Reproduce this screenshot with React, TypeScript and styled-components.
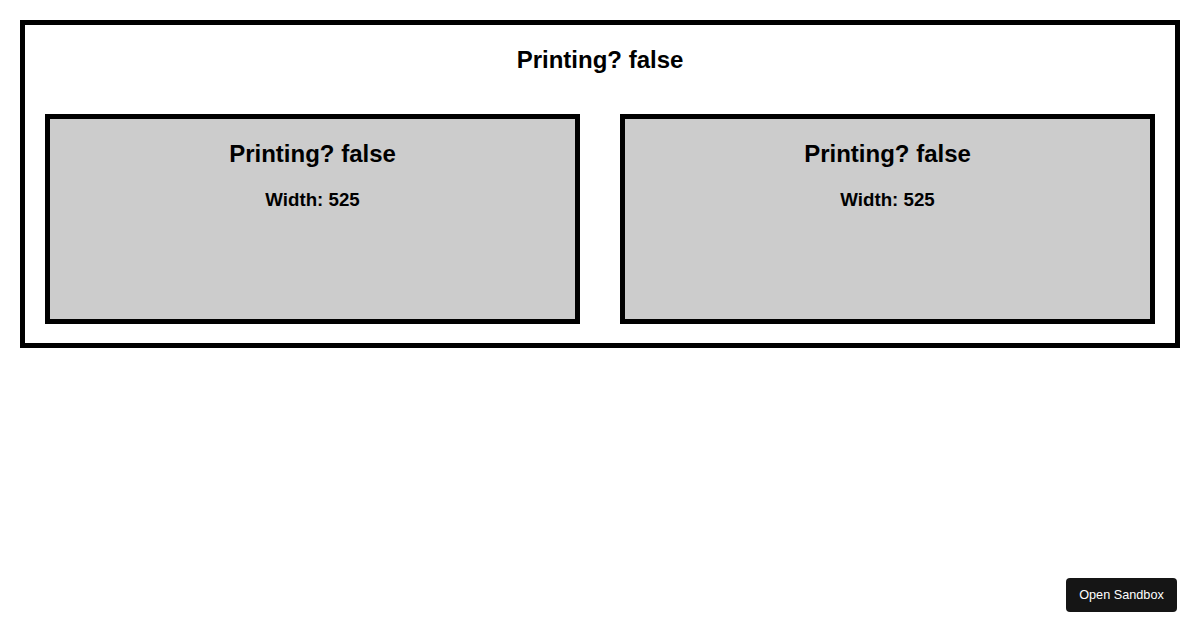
import styled, { createGlobalStyle } from "styled-components";

const GlobalStyle = createGlobalStyle`
  html, body {
    margin: 0;
    padding: 0;
    background: #fff;
    font-family: "Liberation Sans", Arial, sans-serif;
    color: #000;
  }
`;

const Page = styled.div`
  padding: 20px;
`;

const Frame = styled.div`
  border: 5px solid #000;
  text-align: center;
`;

const Title = styled.h2`
  font-size: 24px;
  font-weight: 700;
  margin: 21px 0 19px;
`;

const Row = styled.div`
  display: flex;
  gap: 40px;
  padding: 20.5px 20px 19.5px;
`;

const Panel = styled.div`
  flex: 1;
  height: 200px;
  border: 5px solid #000;
  background: #cccccc;
  text-align: center;
`;

const Subtitle = styled.h3`
  font-size: 18.72px;
  font-weight: 700;
  margin: 21.5px 0;
`;

const SandboxButton = styled.button`
  position: fixed;
  right: 23px;
  bottom: 18px;
  width: 111px;
  height: 34px;
  padding: 0 0 1px;
  border: none;
  border-radius: 4px;
  background: #151515;
  color: #fff;
  font-family: "Liberation Sans", Arial, sans-serif;
  font-size: 12.7px;
  cursor: pointer;
`;

function PrintPanel({ width }: { width: number }) {
  return (
    <Panel>
      <Title>Printing? false</Title>
      <Subtitle>Width: {width}</Subtitle>
    </Panel>
  );
}

export default function App() {
  return (
    <>
      <GlobalStyle />
      <Page>
        <Frame>
          <Title>Printing? false</Title>
          <Row>
            <PrintPanel width={525} />
            <PrintPanel width={525} />
          </Row>
        </Frame>
      </Page>
      <SandboxButton>Open Sandbox</SandboxButton>
    </>
  );
}
